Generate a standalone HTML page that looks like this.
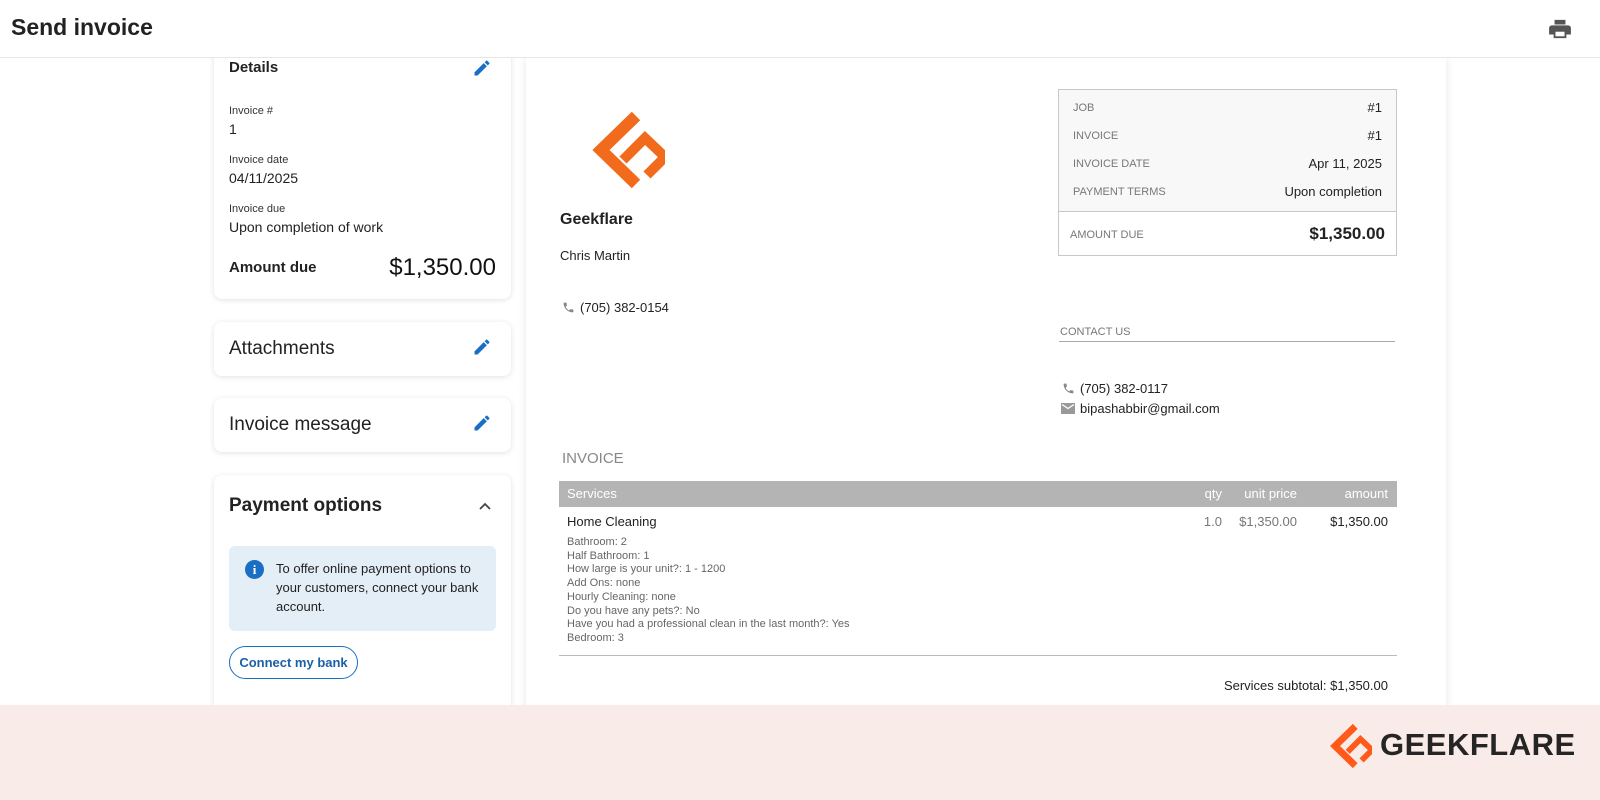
<!DOCTYPE html>
<html><head><meta charset="utf-8">
<style>
*{margin:0;padding:0;box-sizing:border-box}
body{width:1600px;height:800px;overflow:hidden;background:#fff;font-family:"Liberation Sans",sans-serif;position:relative;color:#222}
.a{position:absolute;white-space:nowrap}
.card{position:absolute;left:214px;width:297px;background:#fff;border-radius:8px;box-shadow:0 1px 6px rgba(0,0,0,.12)}
.pen{position:absolute;width:20px;height:20px}
.g{color:#777}
.r{text-align:right}
</style></head><body>
<!-- invoice paper -->
<div class="a" style="left:526px;top:58px;width:920px;height:660px;background:#fff;box-shadow:0 0 8px rgba(0,0,0,.10)"></div>

<!-- card 1 -->
<div class="card" style="top:30px;height:269px"></div>
<div class="a" style="left:229px;top:59px;font-size:15px;font-weight:700;color:#222">Details</div>
<svg class="pen" style="left:472px;top:58px" viewBox="0 0 24 24"><path d="M3 17.25V21h3.75L17.8 9.94l-3.75-3.75L3 17.25zM20.7 7.04a1 1 0 0 0 0-1.41l-2.34-2.34a1 1 0 0 0-1.41 0l-1.83 1.83 3.75 3.75 1.83-1.83z" fill="#1a6fc4"/></svg>
<div class="a" style="left:229px;top:105px;font-size:11px;color:#333">Invoice #</div>
<div class="a" style="left:229px;top:121px;font-size:14px;color:#222">1</div>
<div class="a" style="left:229px;top:154px;font-size:11px;color:#333">Invoice date</div>
<div class="a" style="left:229px;top:170px;font-size:14px;color:#222">04/11/2025</div>
<div class="a" style="left:229px;top:203px;font-size:11px;color:#333">Invoice due</div>
<div class="a" style="left:229px;top:219px;font-size:14px;color:#222">Upon completion of work</div>
<div class="a" style="left:229px;top:259px;font-size:15px;font-weight:700;color:#222">Amount due</div>
<div class="a r" style="left:370px;width:126px;top:254px;font-size:24px;color:#111">$1,350.00</div>

<div class="card" style="top:322px;height:54px"></div>
<div class="a" style="left:229px;top:338px;font-size:19px;color:#222">Attachments</div>
<svg class="pen" style="left:472px;top:337px" viewBox="0 0 24 24"><path d="M3 17.25V21h3.75L17.8 9.94l-3.75-3.75L3 17.25zM20.7 7.04a1 1 0 0 0 0-1.41l-2.34-2.34a1 1 0 0 0-1.41 0l-1.830 1.83 3.75 3.75 1.83-1.83z" fill="#1a6fc4"/></svg>

<div class="card" style="top:398px;height:54px"></div>
<div class="a" style="left:229px;top:414px;font-size:19px;color:#222">Invoice message</div>
<svg class="pen" style="left:472px;top:413px" viewBox="0 0 24 24"><path d="M3 17.25V21h3.75L17.8 9.94l-3.75-3.75L3 17.25zM20.7 7.04a1 1 0 0 0 0-1.41l-2.34-2.34a1 1 0 0 0-1.41 0l-1.83 1.83 3.75 3.75 1.83-1.83z" fill="#1a6fc4"/></svg>

<div class="card" style="top:475px;height:260px"></div>
<div class="a" style="left:229px;top:495px;font-size:19px;font-weight:600;color:#222">Payment options</div>
<svg class="a" style="left:478px;top:500px" width="14" height="12" viewBox="0 0 14 12"><path d="M2 9l5-5 5 5" stroke="#444" stroke-width="1.8" fill="none"/></svg>
<div class="a" style="left:229px;top:546px;width:267px;height:85px;background:#e4eef7;border-radius:6px"></div>
<div class="a" style="left:245px;top:560px;width:19px;height:19px;border-radius:50%;background:#1a6fc4;color:#fff;font-size:13px;font-weight:700;text-align:center;line-height:19px;font-family:'Liberation Serif',serif">i</div>
<div class="a" style="left:276px;top:559px;font-size:13px;line-height:19px;color:#222;white-space:normal;width:215px">To offer online payment options to your customers, connect your bank account.</div>
<div class="a" style="left:229px;top:646px;width:129px;height:33px;border:1px solid #1a6fc4;border-radius:17px;color:#1a5fa8;font-size:13px;font-weight:600;text-align:center;line-height:31px">Connect my bank</div>

<!-- header (on top of card) -->
<div class="a" style="left:0;top:0;width:1600px;height:58px;background:#fff;border-bottom:1px solid #e6e6e6"></div>
<div class="a" style="left:11px;top:14px;font-size:23px;font-weight:700;color:#222">Send invoice</div>
<svg class="a" style="left:1549px;top:19px" width="22" height="20" viewBox="0 0 24 22"><path d="M6 1h12v5H6z M3 7h18a3 3 0 0 1 3 3v7h-5v4H5v-4H0v-7a3 3 0 0 1 3-3z" fill="#555"/><rect x="7" y="14" width="10" height="5" fill="#fff"/></svg>

<!-- invoice content -->
<svg class="a" style="left:575px;top:105px" width="90" height="90" viewBox="575 105 90 90">
<polyline points="636,116 601,150 636,184" fill="none" stroke="#f26a1b" stroke-width="12"/>
<polyline points="623,160 645,138 665,157 647,175" fill="none" stroke="#f26a1b" stroke-width="10"/>
</svg>
<div class="a" style="left:560px;top:211px;font-size:16px;font-weight:700;color:#222">Geekflare</div>
<div class="a" style="left:560px;top:248px;font-size:13px;color:#222">Chris Martin</div>
<svg class="a" style="left:562px;top:301px" width="13" height="13" viewBox="0 0 24 24"><path d="M6.6 10.8c1.4 2.8 3.8 5.1 6.6 6.6l2.2-2.2c.3-.3.7-.4 1-.2 1.1.4 2.300.6 3.6.6.6 0 1 .4 1 1V20c0 .6-.4 1-1 1C10.6 21 3 13.4 3 4c0-.6.4-1 1-1h3.5c.6 0 1 .4 1 1 0 1.3.2 2.5.6 3.6.1.3 0 .7-.2 1z" fill="#888"/></svg>
<div class="a" style="left:580px;top:300px;font-size:13px;color:#222">(705) 382-0154</div>

<div class="a" style="left:1058px;top:89px;width:339px;height:167px;border:1px solid #c8c8c8;background:#fff"></div>
<div class="a" style="left:1059px;top:90px;width:337px;height:122px;background:#f8f8f8;border-bottom:1px solid #c8c8c8"></div>
<div class="a g" style="left:1073px;top:102px;font-size:11px">JOB</div>
<div class="a r" style="left:1300px;width:82px;top:100px;font-size:13px">#1</div>
<div class="a g" style="left:1073px;top:130px;font-size:11px">INVOICE</div>
<div class="a r" style="left:1300px;width:82px;top:128px;font-size:13px">#1</div>
<div class="a g" style="left:1073px;top:158px;font-size:11px">INVOICE DATE</div>
<div class="a r" style="left:1250px;width:132px;top:156px;font-size:13px">Apr 11, 2025</div>
<div class="a g" style="left:1073px;top:186px;font-size:11px">PAYMENT TERMS</div>
<div class="a r" style="left:1250px;width:132px;top:184px;font-size:13px">Upon completion</div>
<div class="a g" style="left:1070px;top:229px;font-size:11px">AMOUNT DUE</div>
<div class="a r" style="left:1250px;width:135px;top:224px;font-size:17px;font-weight:700">$1,350.00</div>

<div class="a g" style="left:1060px;top:326px;font-size:11px">CONTACT US</div>
<div class="a" style="left:1059px;top:341px;width:336px;height:1px;background:#aaa"></div>
<svg class="a" style="left:1062px;top:382px" width="13" height="13" viewBox="0 0 24 24"><path d="M6.6 10.8c1.4 2.8 3.8 5.1 6.6 6.6l2.2-2.2c.3-.3.7-.4 1-.2 1.1.4 2.3.6 3.6.6.6 0 1 .4 1 1V20c0 .6-.4 1-1 1C10.6 21 3 13.4 3 4c0-.6.4-1 1-1h3.5c.6 0 1 .4 1 1 0 1.3.2 2.5.6 3.6.1.3 0 .7-.2 1z" fill="#888"/></svg>
<div class="a" style="left:1080px;top:381px;font-size:13px">(705) 382-0117</div>
<svg class="a" style="left:1061px;top:403px" width="14" height="11" viewBox="0 0 14 11"><rect width="14" height="11" fill="#999"/><path d="M1 1.5l6 4 6-4" stroke="#fff" stroke-width="1.3" fill="none"/></svg>
<div class="a" style="left:1080px;top:401px;font-size:13px">bipashabbir@gmail.com</div>

<div class="a" style="left:562px;top:450px;font-size:15px;color:#888">INVOICE</div>
<div class="a" style="left:559px;top:481px;width:838px;height:26px;background:#b4b4b4"></div>
<div class="a" style="left:567px;top:486px;font-size:13px;color:#fff">Services</div>
<div class="a r" style="left:1180px;width:42px;top:486px;font-size:13px;color:#fff">qty</div>
<div class="a r" style="left:1220px;width:77px;top:486px;font-size:13px;color:#fff">unit price</div>
<div class="a r" style="left:1300px;width:88px;top:486px;font-size:13px;color:#fff">amount</div>
<div class="a" style="left:567px;top:514px;font-size:13px;color:#222">Home Cleaning</div>
<div class="a r g" style="left:1180px;width:42px;top:514px;font-size:13px">1.0</div>
<div class="a r g" style="left:1220px;width:77px;top:514px;font-size:13px">$1,350.00</div>
<div class="a r" style="left:1300px;width:88px;top:514px;font-size:13px">$1,350.00</div>
<div class="a g" style="left:567px;top:536px;font-size:11px;line-height:13.7px;color:#666">Bathroom: 2<br>Half Bathroom: 1<br>How large is your unit?: 1 - 1200<br>Add Ons: none<br>Hourly Cleaning: none<br>Do you have any pets?: No<br>Have you had a professional clean in the last month?: Yes<br>Bedroom: 3</div>
<div class="a" style="left:559px;top:655px;width:838px;height:1px;background:#bbb"></div>
<div class="a r" style="left:1150px;width:238px;top:678px;font-size:13px">Services subtotal: $1,350.00</div>

<!-- footer -->
<div class="a" style="left:0;top:705px;width:1600px;height:95px;background:#f9ebe8"></div>
<svg class="a" style="left:1320px;top:720px" width="52" height="52" viewBox="575 105 90 90">
<polyline points="636,116 601,150 636,184" fill="none" stroke="#ff5a1a" stroke-width="12"/>
<polyline points="623,160 645,138 665,157 647,175" fill="none" stroke="#ff5a1a" stroke-width="10"/>
</svg>
<div class="a" style="left:1380px;top:727px;font-size:31px;font-weight:700;color:#252525;letter-spacing:0.5px">GEEKFLARE</div>
</body></html>
